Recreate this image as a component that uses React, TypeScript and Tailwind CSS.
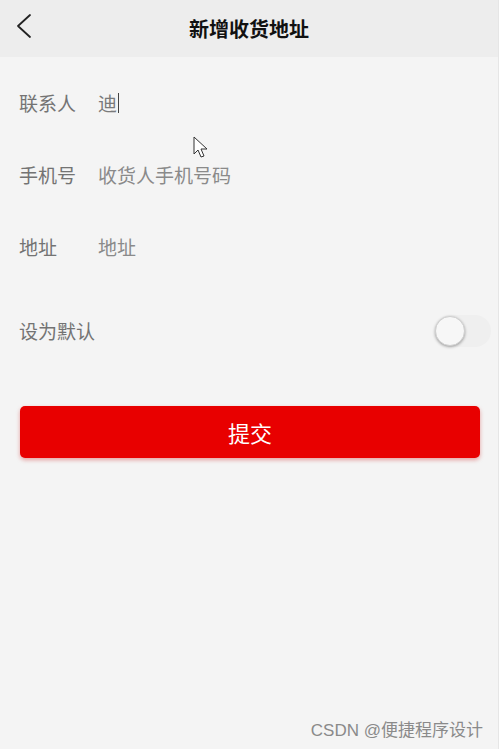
const cjk = { fontFamily: '"Noto Sans CJK SC", "Liberation Sans", sans-serif' };

function Field({ label, value, placeholder, caret }: { label: string; value?: string; placeholder?: string; caret?: boolean }) {
  return (
    <div className="flex items-center h-[72px] px-[19px]">
      <span className="w-[79px] text-[19px] text-[#737373]">{label}</span>
      <div className="flex items-center text-[19px]">
        {value ? <span className="text-[#7a7a7a]">{value}</span> : <span className="text-[#8a8a8a]">{placeholder}</span>}
        {caret && <span className="w-px h-[20px] bg-[#444] ml-px" />}
      </div>
    </div>
  );
}

export default function App() {
  return (
    <div className="relative w-[499px] h-[749px] bg-[#f4f4f4] overflow-hidden border-r border-[#e6e6e6]" style={cjk}>
      {/* Header */}
      <header className="relative h-[57px] bg-[#ededed] flex items-center justify-center">
        <svg className="absolute left-[14px] top-[13px]" width="20" height="26" viewBox="0 0 20 26" fill="none">
          <path d="M16 2 L4 13 L16 24" stroke="#222" strokeWidth="1.8" strokeLinecap="round" strokeLinejoin="round" />
        </svg>
        <h1 className="text-[20px] font-bold text-[#111]">新增收货地址</h1>
      </header>

      <div className="pt-[10px]">
        <Field label="联系人" value="迪" caret />
        <Field label="手机号" placeholder="收货人手机号码" />
        <Field label="地址" placeholder="地址" />
      </div>

      {/* Default switch */}
      <div className="flex items-center justify-between h-[50px] mt-[23px] pl-[19px] pr-[7px]">
        <span className="text-[19px] text-[#737373]">设为默认</span>
        <div className="w-[56px] h-[32px] rounded-full bg-[#efefef] flex items-center">
          <div className="w-[30px] h-[30px] rounded-full bg-[#f7f7f7] border border-[#d0d0d0] shadow-[0_1px_3px_rgba(0,0,0,0.35)]" />
        </div>
      </div>

      <div className="pl-[20px] pr-[18px] mt-[50px]">
        <button className="w-full h-[52px] rounded-[5px] bg-[#e80000] text-white text-[22px] shadow-[0_2px_4px_rgba(200,0,0,0.35)]">
          提交
        </button>
      </div>

      {/* pointer */}
      <svg className="absolute left-[193px] top-[136px]" width="17" height="24" viewBox="0 0 17 24">
        <path d="M1 1 L1 18 L5 14 L8 21 L11 20 L8 13 L14 13 Z" fill="#fff" stroke="#333" strokeWidth="1" strokeLinejoin="round" />
      </svg>

      <div
        className="absolute right-[15px] bottom-[6px] text-[17px] text-[#8a8a8a]"
        style={{ fontFamily: '"Liberation Sans", "Noto Sans CJK SC", sans-serif' }}
      >
        CSDN @便捷程序设计
      </div>
    </div>
  );
}
